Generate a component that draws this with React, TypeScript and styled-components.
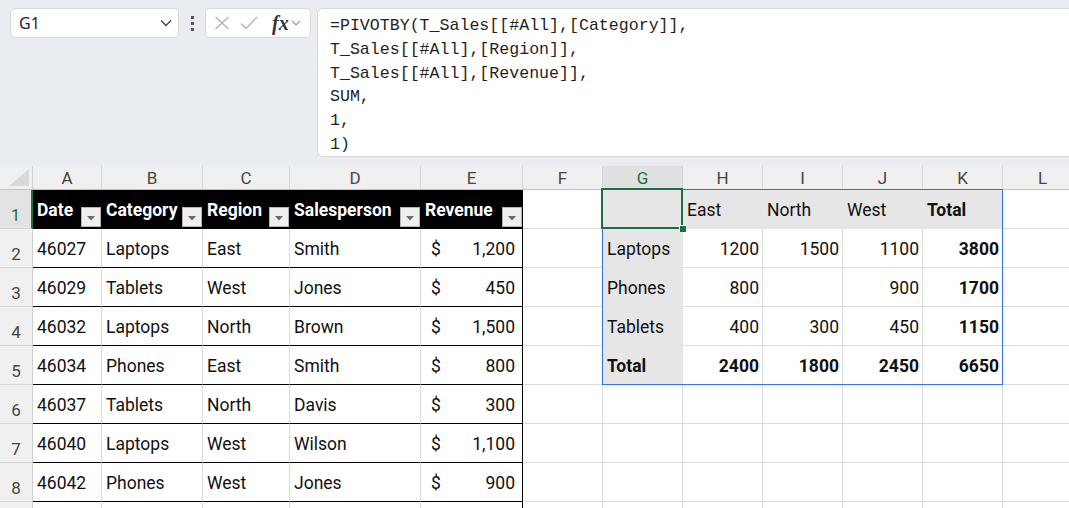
import React from 'react';
import styled, { createGlobalStyle, css } from 'styled-components';

const GlobalStyle = createGlobalStyle`
  html, body {
    margin: 0;
    padding: 0;
    background: #ffffff;
    overflow: hidden;
  }
  * {
    box-sizing: border-box;
  }
`;

const COLUMNS = ['A', 'B', 'C', 'D', 'E', 'F', 'G', 'H', 'I', 'J', 'K', 'L'];
const HEADINGS = ['Date', 'Category', 'Region', 'Salesperson', 'Revenue'];

const SALES = [
  ['46027', 'Laptops', 'East', 'Smith', '1,200'],
  ['46029', 'Tablets', 'West', 'Jones', '450'],
  ['46032', 'Laptops', 'North', 'Brown', '1,500'],
  ['46034', 'Phones', 'East', 'Smith', '800'],
  ['46037', 'Tablets', 'North', 'Davis', '300'],
  ['46040', 'Laptops', 'West', 'Wilson', '1,100'],
  ['46042', 'Phones', 'West', 'Jones', '900'],
];

const PIVOT_HEAD = ['', 'East', 'North', 'West', 'Total'];
const PIVOT = [
  ['Laptops', '1200', '1500', '1100', '3800'],
  ['Phones', '800', '', '900', '1700'],
  ['Tablets', '400', '300', '450', '1150'],
  ['Total', '2400', '1800', '2450', '6650'],
];

const FORMULA = [
  '=PIVOTBY(T_Sales[[#All],[Category]],',
  'T_Sales[[#All],[Region]],',
  'T_Sales[[#All],[Revenue]],',
  'SUM,',
  '1,',
  '1)',
];

const GRID = '#dcdcdc';
const GREEN = '#1e6e42';
// only the top of row 9 fits in the window
const VISIBLE_ROWS = 8;

const App: React.FC = () => {
  const rows = [];
  for (let r = 1; r <= 9; r++) {
    const cells: React.ReactNode[] = [];
    cells.push(
      <RowHeader key="h" $active={r === 1}>
        {r <= VISIBLE_ROWS ? r : ''}
      </RowHeader>
    );

    // table A:E
    for (let c = 0; c < 5; c++) {
      const last = c === 4;
      if (r === 1) {
        cells.push(
          <TableHead key={'t' + c}>
            <span>{HEADINGS[c]}</span>
            <FilterButton>
              <svg width="8" height="5" viewBox="0 0 8 5">
                <path d="M0 0 L8 0 L4 4.5 Z" fill="#6b6b6b" />
              </svg>
            </FilterButton>
          </TableHead>
        );
      } else {
        const row = SALES[r - 2];
        if (!row) {
          cells.push(<TableCell key={'t' + c} $last={last} $open />);
        } else if (last) {
          cells.push(
            <TableCell key={'t' + c} $last>
              <Money>
                <span>$</span>
                <span>{row[c]}</span>
              </Money>
            </TableCell>
          );
        } else {
          cells.push(
            <TableCell key={'t' + c} $last={false}>
              {row[c]}
            </TableCell>
          );
        }
      }
    }

    cells.push(<Cell key="f" />);

    // pivot G:K
    for (let c = 0; c < 5; c++) {
      if (r === 1 && c === 0) {
        cells.push(
          <SelectedCell key={'p' + c} $shade>
            <Handle />
          </SelectedCell>
        );
      } else if (r === 1) {
        cells.push(
          <PivotCell key={'p' + c} $shade $bold={c === 4}>
            {PIVOT_HEAD[c]}
          </PivotCell>
        );
      } else if (r <= 5) {
        const row = PIVOT[r - 2];
        cells.push(
          <PivotCell
            key={'p' + c}
            $shade={c === 0}
            $right={c > 0}
            $bold={c === 4 || r === 5}
          >
            {row[c]}
          </PivotCell>
        );
      } else {
        cells.push(<Cell key={'p' + c} />);
      }
    }

    cells.push(<Cell key="l" />);
    rows.push(<React.Fragment key={r}>{cells}</React.Fragment>);
  }

  return (
    <Page>
      <GlobalStyle />
      <TopBar>
        <NameBox>
          <span>G1</span>
          <svg width="12" height="8" viewBox="0 0 12 8">
            <path d="M1 1.5 L6 6.5 L11 1.5" fill="none" stroke="#424242" strokeWidth="1.3" />
          </svg>
        </NameBox>
        <Dots>
          <i />
          <i />
          <i />
        </Dots>
        <FxBox>
          <svg width="16" height="14" viewBox="0 0 16 14">
            <path d="M1.5 1 L14.5 13 M14.5 1 L1.5 13" stroke="#b3b3b3" strokeWidth="1.3" fill="none" />
          </svg>
          <svg width="18" height="14" viewBox="0 0 18 14">
            <path d="M1 7.5 L6 12.5 L17 1" stroke="#b3b3b3" strokeWidth="1.3" fill="none" />
          </svg>
          <FxLabel>fx</FxLabel>
          <svg width="10" height="6" viewBox="0 0 10 6">
            <path d="M1 1 L5 5 L9 1" fill="none" stroke="#9a9a9a" strokeWidth="1.1" />
          </svg>
        </FxBox>
        <FormulaBox>
          {FORMULA.map((line, i) => (
            <FormulaLine key={i}>{line}</FormulaLine>
          ))}
        </FormulaBox>
      </TopBar>

      <Sheet>
        <Corner>
          <svg width="20" height="17" viewBox="0 0 20 17">
            <path d="M0 17 L20 17 L20 0 Z" fill="#d9d9d9" />
          </svg>
        </Corner>
        {COLUMNS.map((col) => (
          <ColHeader key={col} $active={col === 'G'}>
            {col}
          </ColHeader>
        ))}
        {rows}
        <SpillFrame />
      </Sheet>
    </Page>
  );
};

export default App;

const Page = styled.div`
  width: 1069px;
  height: 508px;
  overflow: hidden;
  display: flex;
  flex-direction: column;
  background: #fff;
`;

const TopBar = styled.div`
  height: 166px;
  flex-shrink: 0;
  display: flex;
  align-items: flex-start;
  padding: 8px 0 0 10px;
  background: #e9ecf0;
  font-family: 'Noto Sans', Roboto, sans-serif;
`;

const NameBox = styled.div`
  width: 169px;
  height: 30px;
  display: flex;
  align-items: center;
  justify-content: space-between;
  padding: 0 6px 0 8px;
  background: #fff;
  border: 1px solid #d5d7da;
  border-radius: 5px;
  font-size: 16px;
  color: #242424;
`;

const Dots = styled.div`
  width: 26px;
  height: 30px;
  display: flex;
  flex-direction: column;
  align-items: center;
  justify-content: center;
  gap: 3px;

  i {
    width: 3px;
    height: 3px;
    background: #555;
  }
`;

const FxBox = styled.div`
  width: 106px;
  height: 30px;
  display: flex;
  align-items: center;
  gap: 10px;
  padding: 0 0 0 8px;
  background: #fff;
  border: 1px solid #d5d7da;
  border-radius: 5px;

  svg:last-child {
    margin-left: -8px;
  }
`;

const FxLabel = styled.span`
  font-family: 'Liberation Serif', serif;
  font-style: italic;
  font-weight: 700;
  font-size: 20px;
  color: #333;
  margin-left: 4px;
  line-height: 1;
`;

const FormulaBox = styled.div`
  flex: 1;
  height: 149px;
  margin: 0 -10px 0 6px;
  padding: 5px 12px;
  background: #fff;
  border: 1px solid #d5d7da;
  border-radius: 6px;
`;

const FormulaLine = styled.div`
  font-family: 'Liberation Mono', monospace;
  font-size: 16.6px;
  line-height: 23.8px;
  color: #1f1f1f;
  white-space: pre;
`;

const Sheet = styled.div`
  position: relative;
  display: grid;
  grid-template-columns: 33px 69px 101px 87px 131px 102px repeat(7, 80px);
  grid-template-rows: 24px repeat(9, 39px);
  font-family: Roboto, 'Liberation Sans', sans-serif;
  font-size: 17.5px;
  color: #111;
`;

const headerBase = css`
  display: flex;
  justify-content: center;
  background: #f0f0f0;
  color: #454545;
  font-size: 17px;
`;

const Corner = styled.div`
  ${headerBase};
  align-items: flex-end;
  justify-content: flex-end;
  padding: 0 3px 3px 0;
  border-right: 1px solid #cfcfcf;
  border-bottom: 1px solid #c3c3c3;
`;

const ColHeader = styled.div<{ $active?: boolean }>`
  ${headerBase};
  align-items: center;
  border-right: 1px solid #d6d6d6;
  border-bottom: 1px solid ${(p) => (p.$active ? GREEN : '#c3c3c3')};
  ${(p) =>
    p.$active &&
    css`
      background: #e0e0e0;
      color: ${GREEN};
    `}
`;

const RowHeader = styled.div<{ $active?: boolean }>`
  ${headerBase};
  align-items: flex-end;
  padding-bottom: 3px;
  border-right: 1px solid ${(p) => (p.$active ? GREEN : '#cfcfcf')};
  border-bottom: 1px solid #d6d6d6;
  ${(p) =>
    p.$active &&
    css`
      background: #e3e3e3;
      color: ${GREEN};
      border-right-width: 2px;
    `}
`;

const Cell = styled.div`
  border-right: 1px solid ${GRID};
  border-bottom: 1px solid ${GRID};
  background: #fff;
`;

const TableHead = styled.div`
  display: flex;
  align-items: center;
  justify-content: space-between;
  padding: 1px 1px 0 4px;
  background: #000;
  color: #fff;
  font-weight: 700;
  white-space: nowrap;

  span {
    margin-bottom: 1px;
  }
`;

const FilterButton = styled.div`
  align-self: flex-end;
  width: 20px;
  height: 20px;
  margin-bottom: 2px;
  flex-shrink: 0;
  display: flex;
  align-items: center;
  justify-content: center;
  padding-top: 2px;
  background: #efefef;
  border: 1px solid #b4b4b4;
`;

const TableCell = styled.div<{ $last?: boolean; $open?: boolean }>`
  display: flex;
  align-items: center;
  padding: 2px 4px 0;
  white-space: nowrap;
  background: #fff;
  border-right: 1px solid ${(p) => (p.$last ? '#000' : GRID)};
  border-bottom: 1px solid ${(p) => (p.$open ? GRID : '#000')};
`;

const Money = styled.div`
  flex: 1;
  display: flex;
  justify-content: space-between;
  padding: 0 3px 0 6px;
`;

const PivotCell = styled.div<{ $shade?: boolean; $bold?: boolean; $right?: boolean }>`
  display: flex;
  align-items: center;
  justify-content: ${(p) => (p.$right ? 'flex-end' : 'flex-start')};
  padding: 2px 3px 0 4px;
  white-space: nowrap;
  font-weight: ${(p) => (p.$bold ? 700 : 400)};
  background: ${(p) => (p.$shade ? '#e6e6e6' : '#fff')};
  border-right: 1px solid ${(p) => (p.$shade ? '#e6e6e6' : GRID)};
  border-bottom: 1px solid ${(p) => (p.$shade ? '#e6e6e6' : GRID)};
`;

const SelectedCell = styled(PivotCell)`
  position: relative;

  &::after {
    content: '';
    position: absolute;
    top: -2px;
    left: -2px;
    right: -1px;
    bottom: -1px;
    border: 2px solid ${GREEN};
    z-index: 3;
  }
`;

const Handle = styled.div`
  position: absolute;
  right: -4px;
  bottom: -4px;
  width: 7px;
  height: 7px;
  background: ${GREEN};
  border-left: 1px solid #fff;
  border-top: 1px solid #fff;
  z-index: 4;
`;

const SpillFrame = styled.div`
  position: absolute;
  grid-column: 8 / 13;
  grid-row: 2 / 7;
  top: -1px;
  left: -1px;
  right: 0;
  bottom: 0;
  border: 1px solid #3b72d6;
  box-shadow: 1px 2px 4px rgba(0, 0, 0, 0.08);
  pointer-events: none;
  z-index: 2;
`;
